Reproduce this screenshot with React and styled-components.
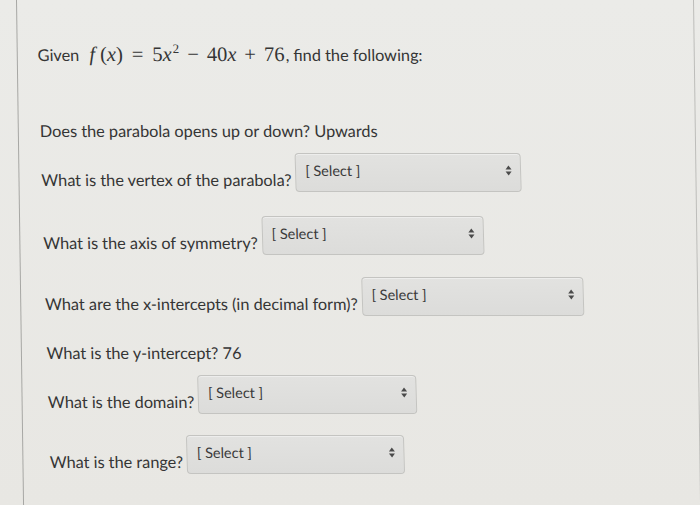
import styled, { createGlobalStyle } from "styled-components";

const Global = createGlobalStyle`
  html, body {
    margin: 0;
    padding: 0;
    background: #e9e8e4;
  }
  body {
    font-family: Lato, "Open Sans", sans-serif;
    color: #353535;
  }
`;

const Page = styled.div`
  width: 700px;
  height: 505px;
  overflow: hidden;
  background: linear-gradient(180deg, #ebebe8 0%, #e8e7e3 100%);
`;

const Panel = styled.div`
  margin-left: 16px;
  width: 678px;
  height: 505px;
  box-sizing: border-box;
  border-left: 1px solid #a7a7a4;
  border-right: 1px solid #bdbdba;
  transform: skewX(0.8deg);
  transform-origin: top left;
`;

const Content = styled.div`
  display: flex;
  flex-direction: column;
  padding: 37px 0 0 19px;
  transform: skewX(0.9deg);
  transform-origin: top left;
`;

const Line = styled.div`
  font-size: 16.3px;
  line-height: 24px;
  margin-top: ${(p) => p.$gap || 0}px;
  white-space: nowrap;
`;

const Row = styled.div`
  display: flex;
  align-items: flex-end;
  gap: 4px;
  margin-top: ${(p) => p.$gap || 0}px;
`;

const Label = styled.span`
  font-size: 16.3px;
  line-height: 24px;
  white-space: nowrap;
`;

const Math = styled.span`
  font-family: "Liberation Serif", "DejaVu Serif", serif;
  font-size: 20.5px;
  margin: 0 1px 0 10px;
`;

const Var = styled.i`
  font-style: italic;
`;

const Sup = styled.sup`
  font-size: 13px;
  margin-left: 1px;
`;

const Op = styled.span`
  margin: 0 ${(p) => p.$space || 8}px;
`;

const SelectBox = styled.div`
  display: flex;
  align-items: center;
  justify-content: space-between;
  box-sizing: border-box;
  width: ${(p) => p.$width}px;
  height: 39px;
  padding: 0 8px 3px 9px;
  border: 1px solid #c4c4c1;
  border-radius: 4px;
  background: linear-gradient(180deg, #e2e2e0 0%, #dcdcda 100%);
  box-shadow: inset 0 1px 0 rgba(255, 255, 255, 0.4);
  font-size: 14.5px;
  color: #3a3a3a;
`;

const Arrows = () => (
  <svg width="7" height="11" viewBox="0 0 7 11">
    <path d="M3.5 0.5 L6.5 4.5 H0.5 Z" fill="#4a4a4a" />
    <path d="M3.5 10.5 L6.5 6.5 H0.5 Z" fill="#4a4a4a" />
  </svg>
);

const Select = ({ width }) => (
  <SelectBox $width={width}>
    <span>[ Select ]</span>
    <Arrows />
  </SelectBox>
);

export default function App() {
  return (
    <Page>
      <Global />
      <Panel>
        <Content>
          <Line>
            Given
            <Math>
              <Var>f</Var> <span>(</span>
              <Var>x</Var>
              <span>)</span>
              <Op $space={9}>=</Op>5<Var>x</Var>
              <Sup>2</Sup>
              <Op>−</Op>40<Var>x</Var>
              <Op>+</Op>76
            </Math>
            , find the following:
          </Line>
          <Line $gap={52}>Does the parabola opens up or down? Upwards</Line>
          <Row $gap={10}>
            <Label>What is the vertex of the parabola?</Label>
            <Select width={226} />
          </Row>
          <Row $gap={24}>
            <Label>What is the axis of symmetry?</Label>
            <Select width={222} />
          </Row>
          <Row $gap={22}>
            <Label>What are the x-intercepts (in decimal form)?</Label>
            <Select width={222} />
          </Row>
          <Line $gap={25}>What is the y-intercept? 76</Line>
          <Row $gap={10}>
            <Label>What is the domain?</Label>
            <Select width={219} />
          </Row>
          <Row $gap={21}>
            <Label>What is the range?</Label>
            <Select width={218} />
          </Row>
        </Content>
      </Panel>
    </Page>
  );
}
